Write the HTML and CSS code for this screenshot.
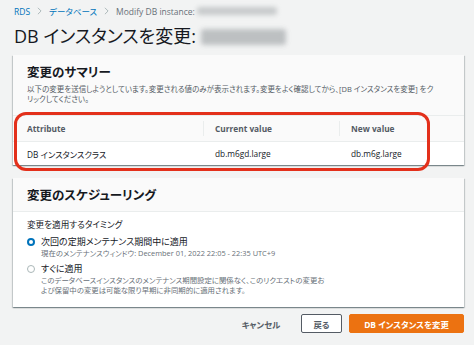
FILE: index.html
```html
<!DOCTYPE html>
<html lang="ja">
<head>
<meta charset="utf-8">
<link rel="stylesheet" href="styles.css">
</head>
<body>
<div class="page">
  <nav class="crumbs">
    <a class="crumb-link">RDS</a>
    <svg class="chev" viewBox="0 0 6 10" width="5" height="8"><path d="M1 1l4 4-4 4" fill="none" stroke="#aab7b8" stroke-width="1.2"/></svg>
    <a class="crumb-link">データベース</a>
    <svg class="chev" viewBox="0 0 6 10" width="5" height="8"><path d="M1 1l4 4-4 4" fill="none" stroke="#aab7b8" stroke-width="1.2"/></svg>
    <span class="crumb-cur">Modify DB instance: </span><span class="blur blur-sm"></span>
  </nav>
  <h1 class="title">DB インスタンスを変更: <span class="blur blur-lg"></span></h1>

  <section class="card card-summary">
    <div class="card-head summary-head">
      <h2 class="card-title">変更のサマリー</h2>
      <p class="card-desc">以下の変更を送信しようとしています。変更される値のみが表示されます。変更をよく確認してから、[DB インスタンスを変更] をク<br>リックしてください。</p>
    </div>
    <div class="table">
      <div class="th">Attribute</div>
      <div class="th th-div">Current value</div>
      <div class="th th-div">New value</div>
      <div class="td">DB インスタンスクラス</div>
      <div class="td">db.m6gd.large</div>
      <div class="td">db.m6g.large</div>
    </div>
    <div class="highlight"></div>
  </section>

  <section class="card card-sched">
    <div class="card-head sched-head">
      <h2 class="card-title">変更のスケジューリング</h2>
    </div>
    <div class="card-body">
      <div class="field-label">変更を適用するタイミング</div>
      <div class="radio">
        <span class="dot dot-on"></span>
        <div class="radio-text">
          <div class="radio-label">次回の定期メンテナンス期間中に適用</div>
          <div class="radio-desc">現在のメンテナンスウィンドウ: December 01, 2022 22:05 - 22:35 UTC+9</div>
        </div>
      </div>
      <div class="radio">
        <span class="dot"></span>
        <div class="radio-text">
          <div class="radio-label">すぐに適用</div>
          <div class="radio-desc">このデータベースインスタンスのメンテナンス期間設定に関係なく、このリクエストの変更お<br>よび保留中の変更は可能な限り早期に非同期的に適用されます。</div>
        </div>
      </div>
    </div>
  </section>

  <div class="actions">
    <button class="btn btn-link">キャンセル</button>
    <button class="btn btn-normal">戻る</button>
    <button class="btn btn-primary">DB インスタンスを変更</button>
  </div>
</div>
</body>
</html>
```

FILE: styles.css
```css
* { box-sizing: border-box; }
html, body { margin: 0; padding: 0; }
body {
  background: #f2f3f3;
  font-family: "Open Sans", "Noto Sans CJK JP", sans-serif;
  font-feature-settings: "palt";
  color: #16191f;
  width: 474px;
  height: 345px;
  overflow: hidden;
}
.page {
  padding: 4px 10px 0 13px;
}
.crumbs {
  display: flex;
  align-items: center;
  height: 14px;
  font-size: 8.5px;
  padding-left: 1px;
}
.crumb-link { color: #0073bb; }
.chev { margin: 0 7px 0 7px; }
.crumb-cur { color: #687078; white-space: pre; }
.blur {
  display: inline-block;
  background: #b4b8ba;
  filter: blur(2.5px);
  border-radius: 3px;
}
.blur-sm { width: 80px; height: 8px; margin-left: 0; opacity: .7; }
.blur-lg { width: 85px; height: 16px; vertical-align: -2px; opacity: .85; }
.title {
  margin: 6px 0 0 1px;
  font-size: 18px;
  font-weight: 400;
  line-height: 24px;
  height: 31px;
  letter-spacing: 0;
}
.card {
  background: #fff;
  box-shadow: 0 1px 1px 0 rgba(0, 28, 36, .3), 1px 1px 1px 0 rgba(0, 28, 36, .15), -1px 1px 1px 0 rgba(0, 28, 36, .15);
  position: relative;
}
.card-head {
  background: #fafafa;
  border-bottom: 1px solid #eaeded;
}
.summary-head {
  padding: 10px 8px 11px 14px;
  border-bottom: none;
}
.card-title {
  margin: 0;
  font-size: 12.5px;
  font-weight: 700;
  line-height: 16px;
}
.card-desc {
  margin: 3px 0 0;
  font-size: 7.5px;
  line-height: 10px;
  color: #545b64;
  white-space: nowrap;
}
.table {
  display: grid;
  grid-template-columns: 190px 136px 1fr;
}
.th {
  position: relative;
  background: #fafafa;
  border-top: 1px solid #eaeded;
  border-bottom: 1px solid #eaeded;
  height: 27px;
  display: flex;
  align-items: center;
  padding-left: 14px;
  font-size: 8.3px;
  font-weight: 700;
  color: #545b64;
}
.th-div { padding-left: 12px; }
.th-div::before {
  content: "";
  position: absolute;
  left: 0;
  top: 5px;
  bottom: 5px;
  border-left: 1px solid #eaeded;
}
.td {
  height: 23px;
  display: flex;
  align-items: center;
  padding-left: 14px;
  font-size: 8.3px;
  color: #16191f;
}
.td + .td { padding-left: 12px; }
.highlight {
  position: absolute;
  left: 1px;
  top: 57px;
  width: 416px;
  height: 59px;
  border: 3px solid #e3301b;
  border-radius: 12px;
  pointer-events: none;
}
.card-sched { margin-top: 13px; }
.sched-head {
  padding: 10px 14px 7px 14px;
  height: 34px;
}
.card-body {
  padding: 7px 14px 12px 14px;
}
.field-label {
  font-size: 8.6px;
  line-height: 12px;
  color: #16191f;
  margin-bottom: 5px;
}
.radio {
  display: flex;
  align-items: flex-start;
  gap: 6px;
  margin-bottom: 5px;
}
.radio:last-child { margin-bottom: 0; }
.dot {
  flex: none;
  width: 8px;
  height: 8px;
  margin-top: 2px;
  border-radius: 50%;
  border: 1px solid #aab7b8;
  background: #fff;
}
.dot-on {
  border: 2.5px solid #0073bb;
}
.radio-label {
  font-size: 9px;
  line-height: 12px;
  color: #16191f;
}
.radio-desc {
  font-size: 7.4px;
  line-height: 10px;
  color: #687078;
}
.actions {
  display: flex;
  justify-content: flex-end;
  align-items: center;
  margin-top: 7px;
  gap: 7px;
}
.btn {
  font-family: inherit;
  font-feature-settings: "palt";
  font-size: 8.4px;
  font-weight: 700;
  height: 19px;
  border-radius: 2px;
  padding: 0;
  cursor: pointer;
}
.btn-link {
  background: none;
  border: none;
  color: #545b64;
  width: 54px;
  margin-right: 6px;
}
.btn-normal {
  background: #fff;
  border: 1px solid #545b64;
  color: #545b64;
  width: 41px;
}
.btn-primary {
  background: #ec7211;
  border: 1px solid #ec7211;
  color: #fff;
  width: 115px;
}
```
